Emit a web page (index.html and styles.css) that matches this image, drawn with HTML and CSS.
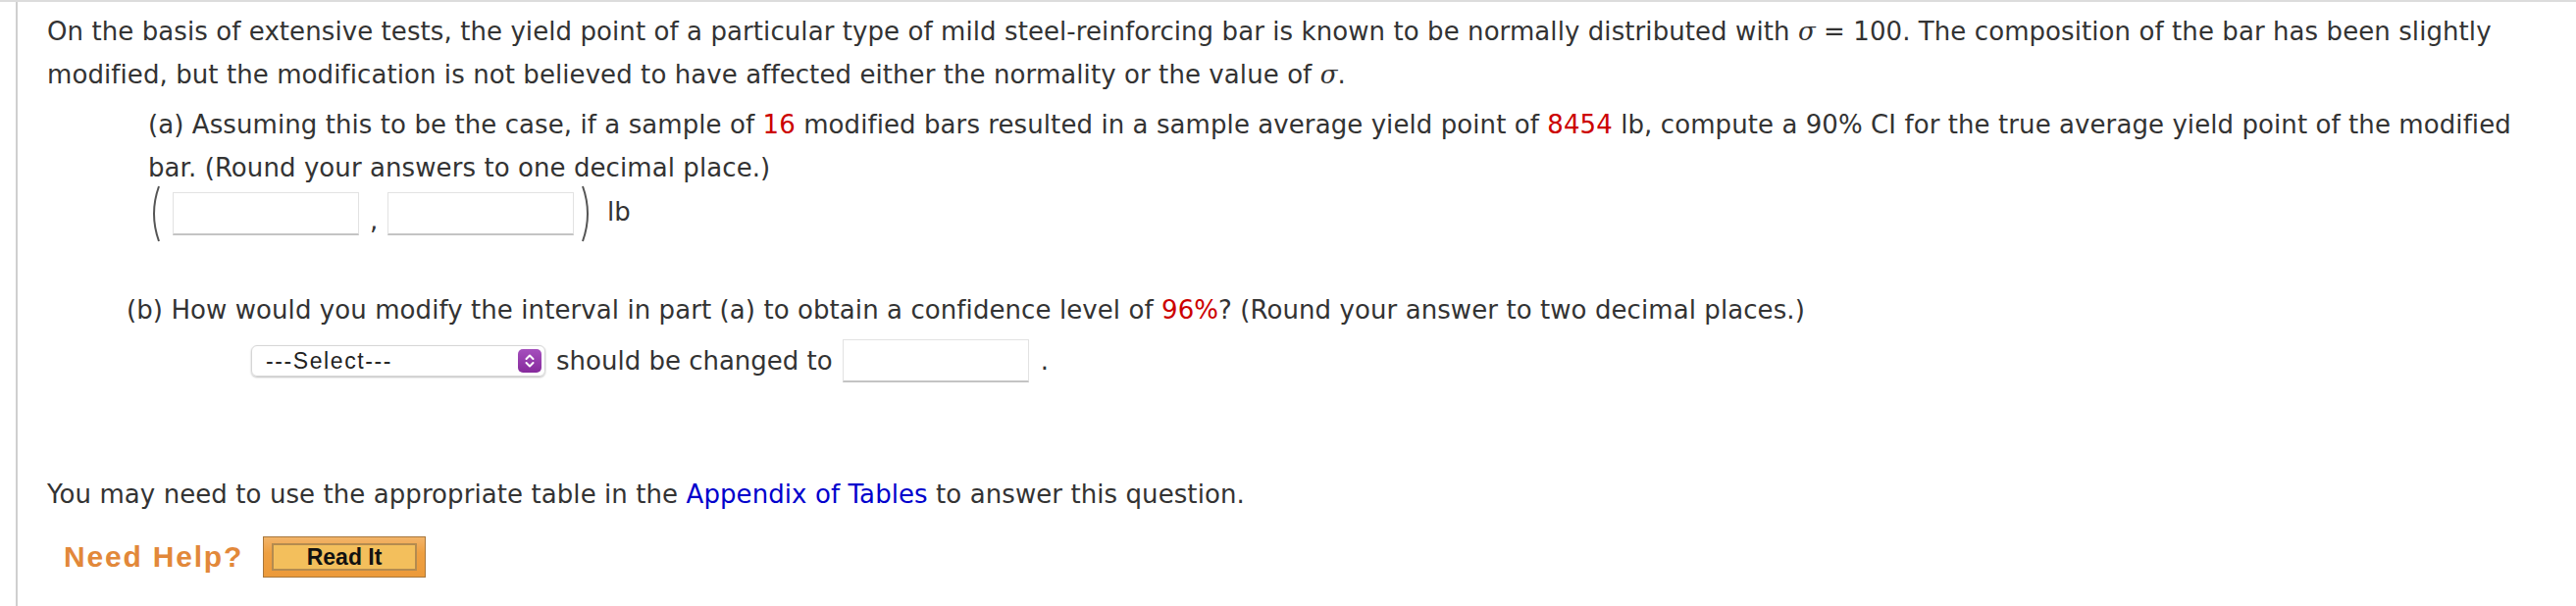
FILE: index.html
```html
<!DOCTYPE html>
<html>
<head>
<meta charset="utf-8">
<link rel="stylesheet" href="styles.css">
</head>
<body>
<div class="topline"></div>
<div class="frame">
  <p class="text intro">On the basis of extensive tests, the yield point of a particular type of mild steel-reinforcing bar is known to be normally distributed with <i class="sym">σ</i> = 100. The composition of the bar has been slightly<br>modified, but the modification is not believed to have affected either the normality or the value of <i class="sym">σ</i>.</p>
  <div class="part parta">
    <p class="text">(a) Assuming this to be the case, if a sample of <span class="red">16</span> modified bars resulted in a sample average yield point of <span class="red">8454</span> lb, compute a 90% CI for the true average yield point of the modified<br>bar. (Round your answers to one decimal place.)</p>
    <div class="interval">
      <svg class="paren" width="14" height="58" viewBox="0 0 14 58"><path d="M11 1 Q1 29 11 57" fill="none" stroke="#555" stroke-width="2"/></svg>
      <span class="ans first"></span>
      <span class="comma">,</span>
      <span class="ans"></span>
      <svg class="paren rparen" width="14" height="58" viewBox="0 0 14 58"><path d="M3 1 Q13 29 3 57" fill="none" stroke="#555" stroke-width="2"/></svg>
      <span class="unit">lb</span>
    </div>
  </div>
  <div class="part partb">
    <p class="text">(b) How would you modify the interval in part (a) to obtain a confidence level of <span class="red">96%</span>? (Round your answer to two decimal places.)</p>
    <div class="selrow">
      <div class="select"><span class="seltext">---Select---</span>
        <span class="stepper"><svg width="24" height="24" viewBox="0 0 24 24"><path d="M8.5 10 L12 6.5 L15.5 10 M8.5 14 L12 17.5 L15.5 14" fill="none" stroke="#fff" stroke-width="2" stroke-linecap="round" stroke-linejoin="round"/></svg></span>
      </div>
      <span class="changed">should be changed to</span>
      <span class="ans"></span>
      <span class="period">.</span>
    </div>
  </div>
  <p class="text note">You may need to use the appropriate table in the <a class="link" href="#">Appendix of Tables</a> to answer this question.</p>
  <div class="help">
    <span class="needhelp">Need Help?</span>
    <span class="readit"><span class="readit-inner">Read It</span></span>
  </div>
</div>
</body>
</html>
```

FILE: styles.css
```css
html, body {
  margin: 0;
  padding: 0;
  background: #fff;
}
body {
  width: 2626px;
  height: 618px;
  overflow: hidden;
  font-family: "DejaVu Sans", Verdana, sans-serif;
  color: #333;
}
.topline {
  height: 2px;
  background: #dcdcdc;
}
.frame {
  margin-left: 16px;
  border-left: 2px solid #cfcfcf;
  padding: 8px 0 40px 30px;
  height: 616px;
  box-sizing: border-box;
}
.text {
  margin: 0;
  font-size: 26px;
  line-height: 44px;
  letter-spacing: 0.08px;
  white-space: nowrap;
}
.sym {
  font-family: "DejaVu Serif", serif;
}
.red {
  color: #cc0000;
}
.part {
  padding-left: 103px;
}
.parta {
  margin-top: 7px;
}
.interval {
  display: flex;
  align-items: center;
  height: 58px;
  margin-top: -4px;
  font-size: 26px;
}
.paren {
  display: block;
}
.interval .first {
  margin-left: 11px;
}
.interval .comma {
  width: 8px;
  margin: 14px 10px 0 11px;
}
.rparen {
  margin-left: 6px;
}
.unit {
  margin-left: 14px;
  margin-bottom: 4px;
}
.ans {
  display: inline-block;
  width: 190px;
  height: 44px;
  box-sizing: border-box;
  border: 1px solid #e2e2e2;
  border-bottom: 2px solid #c4c4c4;
  background: #fff;
}
.partb {
  margin-top: 47px;
  padding-left: 81px;
}
.selrow {
  display: flex;
  align-items: center;
  margin-top: 8px;
  padding-left: 127px;
  font-size: 26px;
  height: 44px;
}
.select {
  width: 300px;
  height: 32px;
  box-sizing: border-box;
  border: 1px solid #d6d6d6;
  border-radius: 6px;
  box-shadow: 0 1px 2px rgba(0,0,0,0.25);
  display: flex;
  align-items: center;
  justify-content: space-between;
  padding: 0 3px 0 14px;
  font-family: "Liberation Sans", Arial, sans-serif;
  font-size: 23px;
  letter-spacing: 1.6px;
  color: #222;
}
.stepper {
  width: 24px;
  height: 24px;
  border-radius: 5px;
  background: linear-gradient(#a54fbd, #862a9c);
  display: block;
}
.stepper svg {
  display: block;
}
.changed {
  margin-left: 11px;
  margin-right: 10px;
}
.period {
  margin-left: 12px;
}
.note {
  margin-top: 92px;
}
.link {
  color: #0000cc;
  text-decoration: none;
}
.help {
  display: flex;
  align-items: center;
  margin-top: 21px;
  padding-left: 17px;
}
.needhelp {
  font-family: "Liberation Sans", Arial, sans-serif;
  font-weight: bold;
  font-size: 30px;
  letter-spacing: 1.8px;
  color: #e2883a;
}
.readit {
  margin-left: 20px;
  width: 166px;
  height: 42px;
  box-sizing: border-box;
  border: 1px solid #a8773c;
  background: linear-gradient(#f2b469, #eea042 40%, #ec9a3a);
  padding: 6px 8px 6px 8px;
  display: block;
}
.readit-inner {
  display: flex;
  align-items: center;
  justify-content: center;
  height: 100%;
  box-sizing: border-box;
  border: 2px solid #b48b4f;
  background: #f3bf5c;
  font-family: "Liberation Sans", Arial, sans-serif;
  font-weight: bold;
  font-size: 23px;
  color: #111;
}
```
